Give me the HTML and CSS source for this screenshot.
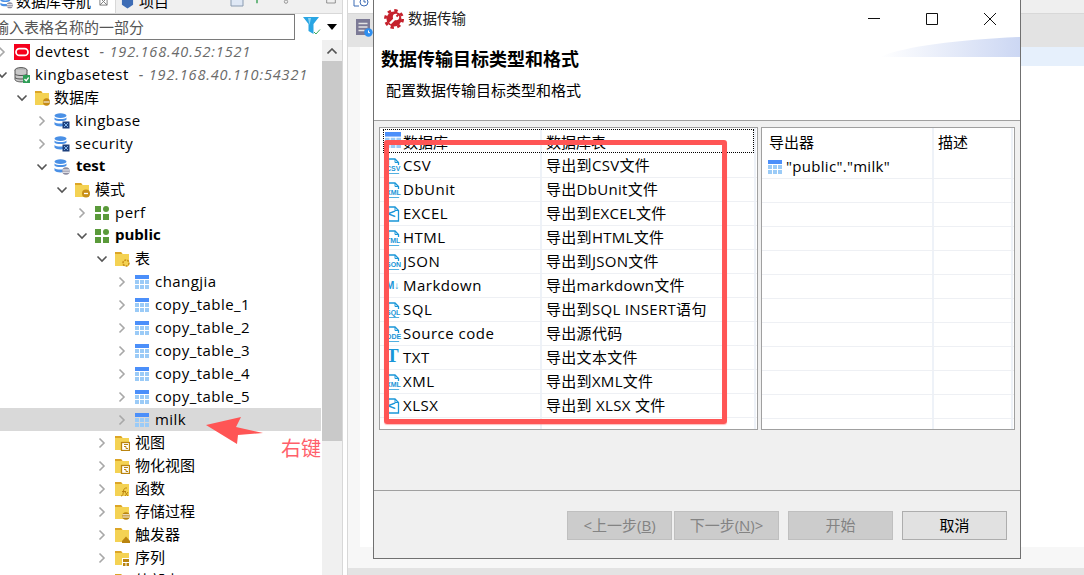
FILE: index.html
```html
<!DOCTYPE html>
<html lang="zh">
<head>
<meta charset="utf-8">
<title>数据传输</title>
<link rel="stylesheet" href="styles.css">
</head>
<body>
<svg class="defs" aria-hidden="true">
  <defs>
    <symbol id="chev-r" viewBox="0 0 8 12"><path d="M1.5 1.5 6 6l-4.5 4.5" fill="none" stroke="#a8a8a8" stroke-width="1.6"/></symbol>
    <symbol id="chev-d" viewBox="0 0 12 8"><path d="M1.5 1.5 6 6l4.5-4.5" fill="none" stroke="#555" stroke-width="1.6"/></symbol>
    <symbol id="oracle" viewBox="0 0 16 16"><rect width="16" height="16" fill="#f5001c"/><rect x="2" y="4.6" width="12" height="6.8" rx="3.4" fill="none" stroke="#fff" stroke-width="1.7"/></symbol>
    <symbol id="kbdb" viewBox="0 0 16 16"><ellipse cx="7" cy="3" rx="6" ry="2.4" fill="#b9b9b9" stroke="#555"/><path d="M1 3v9.500c0 1.300 2.700 2.400 6 2.400s6-1.100 6-2.400V3" fill="#c9c9c9" stroke="#555"/><path d="M1 7c1 2 11 2 12 0M1 10.500c1 2 11 2 12 0" fill="none" stroke="#555"/><rect x="9" y="8" width="7" height="8" fill="#2f9e57"/><path d="m10.500 12 1.700 1.800 2.500-3.300" fill="none" stroke="#fff" stroke-width="1.300"/></symbol>
    <symbol id="folder" viewBox="0 0 16 16"><path d="M1 1h6l1.500 2H15v12H1z" fill="#f4d253"/><path d="M1 1h6l1.500 2H1z" fill="#dca526"/></symbol>
    <symbol id="folder-db" viewBox="0 0 16 16"><use href="#folder"/><ellipse cx="12.500" cy="12" rx="3.500" ry="3.800" fill="#c58a14"/><path d="M9.500 12h6" stroke="#fff"/></symbol>
    <symbol id="folder-schema" viewBox="0 0 16 16"><use href="#folder"/><circle cx="12" cy="11.500" r="4" fill="#c88f18"/><path d="M10 11.500h4" stroke="#fff" stroke-width="1.300"/></symbol>
    <symbol id="folder-table" viewBox="0 0 16 16"><use href="#folder"/><circle cx="12" cy="12" r="3" fill="none" stroke="#c88f18" stroke-width="1.500" stroke-dasharray="2 1"/></symbol>
    <symbol id="folder-view" viewBox="0 0 16 16"><use href="#folder"/><rect x="7.500" y="7.500" width="8" height="8" fill="#fff" stroke="#b98410" stroke-width="1.300"/><path d="M10 9.500h4M10 11.500h2v2h2" fill="none" stroke="#b98410"/></symbol>
    <symbol id="folder-fn" viewBox="0 0 16 16"><use href="#folder"/><path d="M7 15c2 0 2-2 2.500-5S11 7 13 7M8 10.500h4M11 11l3 4M14 11l-3 4" fill="none" stroke="#b98410"/></symbol>
    <symbol id="folder-proc" viewBox="0 0 16 16"><use href="#folder"/><ellipse cx="12" cy="12" rx="3.800" ry="3.800" fill="#b98410"/><path d="M8.500 10.800h7M8.500 13h7" stroke="#fff"/></symbol>
    <symbol id="folder-trig" viewBox="0 0 16 16"><use href="#folder"/><path d="M12 9.500 16 14v2H8v-2z" fill="#b98410"/></symbol>
    <symbol id="folder-seq" viewBox="0 0 16 16"><use href="#folder"/><path d="M8 8h8v8H8z" fill="#fff"/><path d="M9 9h6v3H9zM9 13h2.500v3H9zM12.500 13H15v3h-2.500z" fill="#b98410"/></symbol>
    <symbol id="db" viewBox="0 0 16 16"><ellipse cx="6.500" cy="2.600" rx="6" ry="2.400" fill="#4a90e6"/><path d="M.5 4.500c1.500 2 10.500 2 12 0v2c-1.500 2-10.500 2-12 0zM.5 9c1.500 2 10.500 2 12 0v2.500c-1.500 2.500-10.500 2.500-12 0z" fill="#4a90e6"/></symbol>
    <symbol id="db-sys" viewBox="0 0 16 16"><use href="#db"/><rect x="8.500" y="8.500" width="7" height="7" fill="#1d3f7c"/><path d="m10 10 4 4M14 10l-4 4" stroke="#7fb2e8"/></symbol>
    <symbol id="db-cur" viewBox="0 0 16 16"><use href="#db"/><ellipse cx="12" cy="12" rx="3.800" ry="3.800" fill="#8c8ca0"/><path d="M8.500 11h7M8.500 13.200h7" stroke="#fff"/></symbol>
    <symbol id="schema" viewBox="0 0 14 14"><path d="M0 0h6v6H0zM0 8h6v6H0zM8 8h6v6H8z" fill="#5a9a3a"/><circle cx="11" cy="3" r="3" fill="#5a9a3a"/></symbol>
    <symbol id="table" viewBox="0 0 14 14"><path d="M0 0h14v4H0z" fill="#4b8ffa"/><path d="M0 5h4v4H0zM5 5h4v4H5zM10 5h4v4h-4zM0 10h4v4H0zM5 10h4v4H5zM10 10h4v4h-4z" fill="#9bcbf7"/></symbol>
    <symbol id="doc" viewBox="0 0 16 16"><path d="M3.500 8V1H10l3.500 3.500V15h-10v-1.500" fill="none" stroke="#1a96d8" stroke-width="1.300"/><path d="M10 1v3.500h3.500" fill="none" stroke="#1a96d8"/></symbol>
    <symbol id="filter" viewBox="0 0 18 20"><path d="M0 0h16l-5.500 7v10l-5-3V7z" fill="#29a5e3"/><path d="M5 1h3L6.500 8z" fill="#8ad4f5"/><path d="m11 15 2 2 4-4.500" fill="none" stroke="#3daa5c"/></symbol>
    <symbol id="swoosh" viewBox="0 0 140 20" preserveAspectRatio="none"><path d="M0 20C25 9 80 3 140 0v20z" fill="url(#swoosh-fill)"/></symbol>
    <linearGradient id="swoosh-fill"><stop offset="0" stop-color="#fff"/><stop offset="1" stop-color="#ccd7f3"/></linearGradient>
  </defs>
</svg>

<div class="desktop">
  <aside class="sidebar">
    <div class="tabs">
      <div class="tab active">
        <svg class="ic-tab"><use href="#db-cur"/></svg><span>数据库导航</span><svg class="tab-x" viewBox="0 0 10 10"><path d="m1 1 8 8M9 1 1 9M1 1h8v8H1z" fill="none" stroke="#777"/></svg>
      </div>
      <div class="tab">
        <svg class="ic-tab" viewBox="0 0 14 14"><path d="M1 2 7 0l6 2v8l-6 4-6-4z" fill="#3d6cb5"/></svg><span>项目</span>
      </div>
      <div class="tab-tools">
        <svg class="tool-a" viewBox="0 0 14 8"><path d="M1 0v6h12V0" fill="#dfe8f5" stroke="#8a9bb0"/></svg>
        <svg class="tool-b" viewBox="0 0 6 6"><path d="M3 0v5" stroke="#2d9c4a" stroke-width="2"/></svg>
        <svg class="tool-c" viewBox="0 0 6 6"><circle cx="3" cy="2" r="2" fill="none" stroke="#888"/></svg>
        <svg class="tool-d" viewBox="0 0 14 6"><path d="M.5 0v4.500h13V0" fill="none" stroke="#666"/></svg>
      </div>
    </div>
    <div class="search">
      <div class="search-box">输入表格名称的一部分</div>
      <svg class="ic-filter"><use href="#filter"/></svg>
      <span class="caret"></span>
    </div>
    <div class="tree-wrap">
      <div class="tree">
        <div class="row l0"><svg class="chev-r"><use href="#chev-r"/></svg><svg class="ic"><use href="#oracle"/></svg><span>devtest</span><em>- 192.168.40.52:1521</em></div>
        <div class="row l0"><svg class="chev-d"><use href="#chev-d"/></svg><svg class="ic"><use href="#kbdb"/></svg><span>kingbasetest</span><em>- 192.168.40.110:54321</em></div>
        <div class="row l1 cn"><svg class="chev-d"><use href="#chev-d"/></svg><svg class="ic"><use href="#folder-db"/></svg><span>数据库</span></div>
        <div class="row l2"><svg class="chev-r"><use href="#chev-r"/></svg><svg class="ic"><use href="#db-sys"/></svg><span>kingbase</span></div>
        <div class="row l2"><svg class="chev-r"><use href="#chev-r"/></svg><svg class="ic"><use href="#db-sys"/></svg><span>security</span></div>
        <div class="row l2 strong"><svg class="chev-d"><use href="#chev-d"/></svg><svg class="ic"><use href="#db-cur"/></svg><span>test</span></div>
        <div class="row l3 cn"><svg class="chev-d"><use href="#chev-d"/></svg><svg class="ic"><use href="#folder-schema"/></svg><span>模式</span></div>
        <div class="row l4"><svg class="chev-r"><use href="#chev-r"/></svg><svg class="ic ic14"><use href="#schema"/></svg><span>perf</span></div>
        <div class="row l4 strong"><svg class="chev-d"><use href="#chev-d"/></svg><svg class="ic ic14"><use href="#schema"/></svg><span>public</span></div>
        <div class="row l5 cn"><svg class="chev-d"><use href="#chev-d"/></svg><svg class="ic"><use href="#folder-table"/></svg><span>表</span></div>
        <div class="row l6"><svg class="chev-r"><use href="#chev-r"/></svg><svg class="ic ic14"><use href="#table"/></svg><span>changjia</span></div>
        <div class="row l6"><svg class="chev-r"><use href="#chev-r"/></svg><svg class="ic ic14"><use href="#table"/></svg><span>copy_table_1</span></div>
        <div class="row l6"><svg class="chev-r"><use href="#chev-r"/></svg><svg class="ic ic14"><use href="#table"/></svg><span>copy_table_2</span></div>
        <div class="row l6"><svg class="chev-r"><use href="#chev-r"/></svg><svg class="ic ic14"><use href="#table"/></svg><span>copy_table_3</span></div>
        <div class="row l6"><svg class="chev-r"><use href="#chev-r"/></svg><svg class="ic ic14"><use href="#table"/></svg><span>copy_table_4</span></div>
        <div class="row l6"><svg class="chev-r"><use href="#chev-r"/></svg><svg class="ic ic14"><use href="#table"/></svg><span>copy_table_5</span></div>
        <div class="row l6 selected"><svg class="chev-r"><use href="#chev-r"/></svg><svg class="ic ic14"><use href="#table"/></svg><span>milk</span></div>
        <div class="row l5 cn"><svg class="chev-r"><use href="#chev-r"/></svg><svg class="ic"><use href="#folder-view"/></svg><span>视图</span></div>
        <div class="row l5 cn"><svg class="chev-r"><use href="#chev-r"/></svg><svg class="ic"><use href="#folder-view"/></svg><span>物化视图</span></div>
        <div class="row l5 cn"><svg class="chev-r"><use href="#chev-r"/></svg><svg class="ic"><use href="#folder-fn"/></svg><span>函数</span></div>
        <div class="row l5 cn"><svg class="chev-r"><use href="#chev-r"/></svg><svg class="ic"><use href="#folder-proc"/></svg><span>存储过程</span></div>
        <div class="row l5 cn"><svg class="chev-r"><use href="#chev-r"/></svg><svg class="ic"><use href="#folder-trig"/></svg><span>触发器</span></div>
        <div class="row l5 cn"><svg class="chev-r"><use href="#chev-r"/></svg><svg class="ic"><use href="#folder-seq"/></svg><span>序列</span></div>
        <div class="row l5 cn"><svg class="chev-r"><use href="#chev-r"/></svg><svg class="ic"><use href="#folder"/></svg><span>外部表</span></div>
      </div>
      <div class="scrollbar">
        <div class="sb-up"><svg viewBox="0 0 10 6"><path d="M.5 5.500 5 1l4.500 4.500" fill="none" stroke="#555" stroke-width="1.600"/></svg></div>
        <div class="sb-thumb"></div>
      </div>
    </div>
  </aside>
  <div class="sash"></div>
  <main class="main">
    <div class="main-tabs">
      <div class="log-tab">
        <svg viewBox="0 0 16 8"><path d="M1 0v6h5" fill="none" stroke="#3d6cb5"/><circle cx="11" cy="2" r="4" fill="#fff" stroke="#3d6cb5"/><path d="M11 0v2h2" fill="none" stroke="#3d6cb5"/></svg>
      </div>
    </div>
    <div class="main-tools">
      <svg viewBox="0 0 18 18"><path d="M1 0h14v16H1z" fill="#7c7a96"/><path d="M3.500 4.500h9M3.500 8h9M3.500 11.500h6" stroke="#e3e3e3" stroke-width="1.500"/><circle cx="13.500" cy="13.500" r="4.200" fill="#2e8ff0"/><path d="M13.500 11.500v2.200h1.500" stroke="#fff" fill="none"/></svg>
    </div>
    <div class="main-body">
      <div class="gutter"></div>
      <div class="editor"><div class="band"></div></div>
    </div>
    <div class="main-foot"></div>
    <div class="main-status"></div>
  </main>
</div>

<section class="dialog">
  <header class="dlg-title">
    <svg class="dlg-icon" viewBox="0 0 20 20"><circle cx="10" cy="10" r="7.500" fill="#c5212c"/><circle cx="10" cy="10" r="8.600" fill="none" stroke="#c5212c" stroke-width="2.800" stroke-dasharray="3.400 3.354"/><path d="m6 14.500 5.500-5.500" stroke="#fff" stroke-width="2.400"/><circle cx="12" cy="8" r="3.200" fill="#fff"/><path d="m12.500 7.500 3-3" stroke="#c5212c" stroke-width="2"/></svg>
    <span class="dlg-name">数据传输</span>
    <div class="win-btns">
      <svg viewBox="0 0 12 12"><path d="M0 5.500h12" stroke="#111"/></svg>
      <svg viewBox="0 0 12 12"><path d="M.5.500h11v11H.5z" fill="none" stroke="#111"/></svg>
      <svg viewBox="0 0 12 12"><path d="m0 0 12 12M12 0 0 12" stroke="#111"/></svg>
    </div>
  </header>
  <div class="dlg-head">
    <svg class="swoosh"><use href="#swoosh"/></svg>
    <h1>数据传输目标类型和格式</h1>
    <p>配置数据传输目标类型和格式</p>
  </div>
  <div class="dlg-content">
    <div class="grid grid-left">
      <div class="tr th focus"><div class="td"><svg class="doc-ic" viewBox="0 0 14 14"><use href="#table"/></svg>数据库</div><div class="td">数据库表</div></div>
      <div class="tr"><div class="td"><svg class="doc-ic"><use href="#doc"/></svg><i>CSV</i>CSV</div><div class="td">导出到CSV文件</div></div>
      <div class="tr"><div class="td"><svg class="doc-ic"><use href="#doc"/></svg><i>XML</i>DbUnit</div><div class="td">导出DbUnit文件</div></div>
      <div class="tr"><div class="td"><svg class="doc-ic"><use href="#doc"/></svg><i class="big">&lt;</i>EXCEL</div><div class="td">导出到EXCEL文件</div></div>
      <div class="tr"><div class="td"><svg class="doc-ic"><use href="#doc"/></svg><i>TML</i>HTML</div><div class="td">导出到HTML文件</div></div>
      <div class="tr"><div class="td"><svg class="doc-ic"><use href="#doc"/></svg><i>SON</i>JSON</div><div class="td">导出到JSON文件</div></div>
      <div class="tr"><div class="td"><i class="md">M↓</i>Markdown</div><div class="td">导出markdown文件</div></div>
      <div class="tr"><div class="td"><svg class="doc-ic"><use href="#doc"/></svg><i>SQL</i>SQL</div><div class="td">导出到SQL INSERT语句</div></div>
      <div class="tr"><div class="td"><svg class="doc-ic"><use href="#doc"/></svg><i>ODE</i>Source code</div><div class="td">导出源代码</div></div>
      <div class="tr"><div class="td"><i class="txt">T</i>TXT</div><div class="td">导出文本文件</div></div>
      <div class="tr"><div class="td"><svg class="doc-ic"><use href="#doc"/></svg><i>XML</i>XML</div><div class="td">导出到XML文件</div></div>
      <div class="tr"><div class="td"><svg class="doc-ic"><use href="#doc"/></svg><i class="big">&lt;</i>XLSX</div><div class="td">导出到 XLSX 文件</div></div>
      <div class="tr"><div class="td"></div><div class="td"></div></div>
    </div>
    <div class="grid grid-right">
      <div class="tr th"><div class="td">导出器</div><div class="td">描述</div></div>
      <div class="tr"><div class="td"><svg class="tbl-ic"><use href="#table"/></svg>"public"."milk"</div><div class="td"></div></div>
      <div class="tr"><div class="td"></div><div class="td"></div></div>
      <div class="tr"><div class="td"></div><div class="td"></div></div>
      <div class="tr"><div class="td"></div><div class="td"></div></div>
      <div class="tr"><div class="td"></div><div class="td"></div></div>
      <div class="tr"><div class="td"></div><div class="td"></div></div>
      <div class="tr"><div class="td"></div><div class="td"></div></div>
      <div class="tr"><div class="td"></div><div class="td"></div></div>
      <div class="tr"><div class="td"></div><div class="td"></div></div>
      <div class="tr"><div class="td"></div><div class="td"></div></div>
      <div class="tr"><div class="td"></div><div class="td"></div></div>
      <div class="tr"><div class="td"></div><div class="td"></div></div>
    </div>
  </div>
  <footer class="dlg-foot">
    <button class="btn" disabled>&lt;上一步(<u>B</u>)</button>
    <button class="btn near" disabled>下一步(<u>N</u>)&gt;</button>
    <button class="btn far" disabled>开始</button>
    <button class="btn far">取消</button>
  </footer>
</section>

<div class="mark-box"></div>
<svg class="mark-arrow" viewBox="0 0 57 27"><path d="M0 8 35 0l-5 10 27 6-25 2-1 9z" fill="#ff5555"/></svg>
<div class="mark-label">右键</div>
</body>
</html>
```
FILE: styles.css
```css
* { box-sizing: border-box; }
html, body { margin: 0; height: 575px; overflow: hidden; }
body {
  position: relative;
  background: #fff;
  color: #000;
  font: 15px/23px "Open Sans", "Noto Sans CJK SC", sans-serif;
}
.defs { position: absolute; width: 0; height: 0; }
.desktop { display: flex; height: 575px; }

/* left navigator */
.sidebar { width: 342px; flex: none; display: flex; flex-direction: column; }
.tabs {
  height: 14px; flex: none; display: flex; overflow: hidden;
  background: #f0f0f0; border-bottom: 1px solid #d8d8d8;
}
.tab { display: flex; align-items: center; gap: 3px; height: 23px; margin-top: -10px; padding: 0 5px 0 0; flex: none; white-space: nowrap; }
.tab.active { width: 116px; background: #fff; border-right: 1px solid #d8d8d8; }
.tab-x { width: 9px; height: 9px; margin-left: 5px; flex: none; }
.tab:not(.active) { padding-left: 5px; gap: 5px; }
.ic-tab { width: 13px; height: 14px; flex: none; }
.tab-tools { position: relative; flex: 1; }
.tab-tools svg { position: absolute; top: 0; }
.tool-a { left: 56px; width: 14px; height: 8px; }
.tool-b { left: 81px; width: 4px; height: 4px; }
.tool-c { left: 109px; width: 6px; height: 5px; }
.tool-d { left: 150px; width: 14px; height: 4px; }

.search { height: 26px; flex: none; display: flex; align-items: center; }
.search-box {
  width: 296px; height: 26px; margin-left: -1px; overflow: hidden; white-space: nowrap;
  border: 1px solid #7a7a7a; color: #555; line-height: 24px; text-indent: -6px;
}
.ic-filter { width: 18px; height: 20px; margin-left: 8px; flex: none; }
.caret { margin-left: 6px; border: 5px solid transparent; border-top: 6px solid #000; border-bottom: 0; }

.tree-wrap { flex: 1; display: flex; min-height: 0; }
.tree { flex: 1; min-width: 0; overflow: hidden; }
.row { display: flex; align-items: center; height: 23px; white-space: nowrap; letter-spacing: .45px; }
.row.cn, .row.strong { letter-spacing: 0; }
.row.selected { background: #d9d9d9; margin-right: 1px; }
.row.strong { font-weight: 700; }
.row.strong span { margin-bottom: 2px; }
.row em { margin-left: 10px; color: #6a6a6a; font-size: 14.500px; letter-spacing: .85px; }
.l0 > :first-child { margin-left: -6px; }
.l1 > :first-child { margin-left: 14px; }
.l2 > :first-child { margin-left: 34px; }
.l3 > :first-child { margin-left: 54px; }
.l4 > :first-child { margin-left: 74px; }
.l5 > :first-child { margin-left: 94px; }
.l6 > :first-child { margin-left: 114px; }
.chev-r { width: 8px; height: 12px; margin-right: 11.500px; transform: translateX(4px); flex: none; }
.chev-d { width: 12px; height: 8px; margin-right: 7.500px; transform: translateX(2px); flex: none; }
.ic { width: 16px; height: 16px; margin-right: 5.500px; flex: none; }
.ic.ic14 { width: 14px; height: 14px; margin-left: 1px; margin-right: 6.500px; }
.l1.cn .ic { margin-right: 4.500px; }
.strong .ic { margin-right: 6.500px; }
.strong .ic.ic14 { margin-right: 6.500px; }
.scrollbar { width: 20px; flex: none; background: #f0f0f0; }
.sb-up { height: 21px; display: flex; align-items: center; justify-content: center; }
.sb-up svg { width: 10px; height: 6px; }
.sb-thumb { height: 380px; background: #c9c9c9; }

.sash { width: 6px; flex: none; border-left: 1px solid #d8d8d8; border-right: 1px solid #d8d8d8; background: #fff; }

/* background editor */
.main { flex: 1; min-width: 0; display: flex; flex-direction: column; }
.main-tabs { height: 14px; flex: none; background: #efefef; border-bottom: 1px solid #d8d8d8; overflow: hidden; }
.log-tab { width: 60px; height: 13px; background: #fff; padding-left: 5px; }
.log-tab svg { display: block; width: 16px; height: 8px; }
.main-tools { height: 33px; flex: none; background: #e3e3e3; padding: 5px 0 0 7px; }
.main-tools svg { display: block; width: 18px; height: 18px; }
.main-body { flex: 1; display: flex; min-height: 0; }
.gutter { width: 12px; flex: none; background: #f7f7f7; }
.editor { flex: 1; min-width: 0; }
.band { height: 19px; margin-left: 13px; background: #e6f0fc; }
.main-foot { height: 21px; flex: none; background: #f7f7f7; }
.main-status { height: 7px; flex: none; background: #e3e3e3; }

/* dialog window */
.dialog {
  position: absolute; left: 373px; top: -1px; width: 648px; height: 560px;
  display: flex; flex-direction: column;
  background: #f0f0f0; border: 1px solid #707070;
}
.dlg-title { height: 37px; flex: none; display: flex; align-items: center; background: #fff; padding-left: 10px; }
.dlg-icon { width: 20px; height: 20px; flex: none; }
.dlg-name { margin-left: 4px; font-size: 14.500px; color: #222; }
.win-btns { display: flex; margin-left: auto; margin-right: 24px; gap: 46px; }
.win-btns svg { width: 12px; height: 12px; display: block; }
.dlg-head {
  position: relative; height: 84px; flex: none;
  background: #fff; border-bottom: 1px solid #a0a0a0; padding: 9px 7px 0;
}
.swoosh { position: absolute; right: 0; top: 0; width: 140px; height: 20px; }
.dlg-head h1 { margin: 0; font-size: 18px; line-height: 26px; font-weight: 700; }
.dlg-head p { margin: 6px 0 0 5px; font-size: 15px; line-height: 24px; }
.dlg-content { flex: 1; min-height: 0; display: flex; gap: 3px; padding: 6px 5px 0; }

.grid { height: 303px; overflow: hidden; background: #fff; border: 1px solid #a0a0a0; flex: none; }
.grid-left { width: 379px; }
.grid-right { width: 254px; }
.tr { display: grid; height: 24px; border-bottom: 1px solid #eef0f4; }
.grid-left .tr { grid-template-columns: 162px 214px; }
.grid-right .tr { grid-template-columns: 172px 79px; }
.tr.th { height: 26px; border-bottom: 0; }
.tr.th .td { padding-top: 2px; }
.grid-right .tr.th { height: 27px; }
.td {
  position: relative; display: flex; align-items: center; white-space: nowrap; overflow: hidden;
  border-right: 2px solid #eef2f8;
}
.grid-left .td:first-child { padding-left: 23px; letter-spacing: .5px; }
.grid-left .td:last-child { padding-left: 4px; letter-spacing: .3px; }
.grid-left .th .td { letter-spacing: 0; }
.grid-right .td:first-child { padding-left: 24px; letter-spacing: .3px; }
.grid-right .td:last-child { padding-left: 4px; }
.grid-right .th .td:first-child { padding-left: 7px; letter-spacing: 0; }
.focus { position: relative; }
.focus::after {
  content: ""; position: absolute; left: 3px; right: 3px; top: 1px; bottom: 1px;
  border: 1px dotted #000;
}
.doc-ic { position: absolute; left: 5px; top: 4px; width: 16px; height: 16px; }
.tbl-ic { position: absolute; left: 6px; top: 5px; width: 14px; height: 14px; }
.td i {
  position: absolute; left: 5px; bottom: 4px; padding: 0 1px; background: #fff; letter-spacing: 0;
  font: 700 7px/8px "Liberation Sans", sans-serif; color: #1a96d8;
}
.td i.big { font-size: 13px; line-height: 10px; left: 7px; bottom: 6px; background: none; }
.td i.md { font-size: 10px; line-height: 11px; left: 5px; bottom: 6px; }
.td i.txt { font: 700 19px/18px "Liberation Serif", serif; left: 5px; bottom: 4px; }

.dlg-foot { height: 68px; flex: none; display: flex; justify-content: flex-end; border-top: 1px solid #a0a0a0; padding: 20px 13px 0 0; }
.btn {
  width: 105px; height: 29px; padding: 0; flex: none;
  font: 15px/1 "Open Sans", "Noto Sans CJK SC", sans-serif;
  background: #e1e1e1; border: 1px solid #adadad; color: #000;
}
.btn:disabled { background: #cccccc; border-color: #bfbfbf; color: #838383; }
.btn.near { margin-left: 2px; }
.btn.far { margin-left: 9px; }

/* annotations */
.mark-box {
  position: absolute; left: 384px; top: 140px; width: 343px; height: 284px;
  border: 5px solid #ff5555; border-radius: 3px; box-shadow: 0 1px 1px rgba(255, 85, 85, .4);
}
.mark-arrow { position: absolute; left: 206px; top: 417px; width: 57px; height: 27px; }
.mark-label { position: absolute; left: 281px; top: 436px; font-size: 20px; line-height: 26px; color: #ff5f6a; }
```
